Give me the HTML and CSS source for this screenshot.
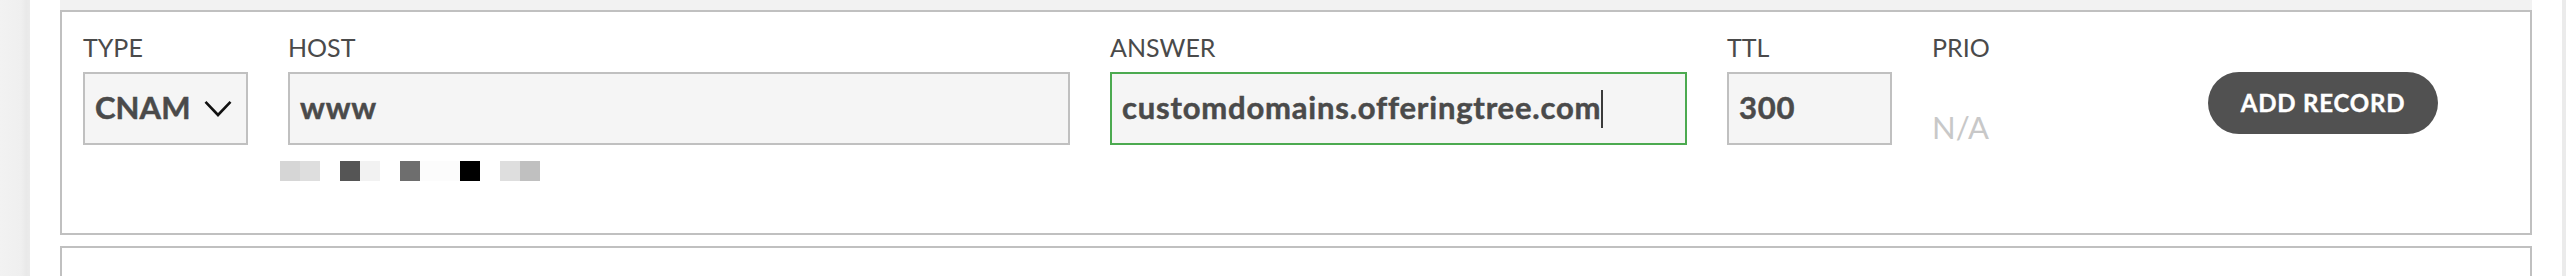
FILE: index.html
```html
<!DOCTYPE html>
<html lang="en">
<head>
<meta charset="utf-8">
<title>Add DNS record</title>
<link rel="stylesheet" href="styles.css">
</head>
<body>
<div class="page">
  <div class="rail-left"></div>
  <main class="main">
    <div class="topband"></div>
    <section class="card">
      <div class="row">
        <div class="field f-type">
          <div class="label">TYPE</div>
          <div class="box select">
            <span class="val">CNAM</span>
            <svg class="chev" width="28" height="17" viewBox="0 0 28 17"><polyline points="1.5,1.8 14,15 26.5,1.8" fill="none" stroke="#111" stroke-width="2.6"/></svg>
          </div>
        </div>
        <div class="field f-host">
          <div class="label">HOST</div>
          <div class="box"><span class="val">www</span></div>
          <div class="pixels">
            <i class="px c1"></i><i class="px c2"></i><i class="px c0"></i><i class="px c3"></i><i class="px c4"></i><i class="px c0"></i><i class="px c5"></i><i class="px c6"></i><i class="px c6"></i><i class="px c7"></i><i class="px c0"></i><i class="px c2"></i><i class="px c8"></i>
          </div>
        </div>
        <div class="field f-answer">
          <div class="label">ANSWER</div>
          <div class="box focus"><span class="val">customdomains.offeringtree.com</span><span class="caret"></span></div>
        </div>
        <div class="field f-ttl">
          <div class="label">TTL</div>
          <div class="box"><span class="val">300</span></div>
        </div>
        <div class="field f-prio">
          <div class="label">PRIO</div>
          <div class="na">N/A</div>
        </div>
        <div class="field f-btn">
          <button class="add-btn" type="button">ADD RECORD</button>
        </div>
      </div>
    </section>
    <section class="card card-next"></section>
  </main>
  <div class="rail-right"></div>
</div>
</body>
</html>
```
FILE: styles.css
```css
* { box-sizing: border-box; }
html, body { margin: 0; padding: 0; background: #fff; }
body { font-family: Lato, "Open Sans", "Liberation Sans", sans-serif; color: #4a4a4a; overflow: hidden; }

.page { display: flex; width: 2566px; height: 276px; }
.rail-left {
  width: 30px; flex: none;
  background: linear-gradient(to right, #f2f2f2 0%, #efefef 70%, #e9e9e9 88%, #ebebeb 100%);
}
.rail-right { width: 4px; flex: none; background: #ebebeb; }
.main { flex: 1; background: #fff; padding: 0 30px; }

.topband { height: 10px; background: #f2f2f2; }

.card {
  border: 2px solid #c0c0c0;
  height: 225px;
  padding: 20px 0 0 21px;
  background: #fff;
}
.card-next { margin-top: 11px; height: 60px; }

.row { display: flex; gap: 40px; align-items: flex-start; }
.field { display: flex; flex-direction: column; flex: none; }
.f-type { width: 165px; }
.f-host { width: 782px; }
.f-answer { width: 577px; }
.f-ttl { width: 165px; }
.f-prio { width: 236px; }
.f-btn { width: 230px; padding-top: 40px; }

.label {
  font-size: 25px; line-height: 30px; height: 30px;
  margin-bottom: 10px; color: #4a4a4a; font-weight: 400;
}

.box {
  height: 73px;
  border: 2px solid #c0c0c0;
  background: #f5f5f5;
  padding: 0 10px 4px;
  display: flex; align-items: center;
  font-size: 31px; font-weight: 700; color: #4a4a4a;
  letter-spacing: 0.8px;
  -webkit-text-stroke: 0.5px #4a4a4a;
  white-space: nowrap;
}
.box.select { letter-spacing: 0.1px; }
.box.focus { border-color: #4caa50; }
.select .chev { margin-left: 13px; margin-top: 4px; }
.caret { display: inline-block; width: 2px; height: 38px; background: #3a3a3a; margin: 4px 0 0 0; }

.pixels { display: flex; margin: 16px 0 0 -8px; height: 20px; }
.px { display: block; width: 20px; height: 20px; }
.c0 { background: #fff; }
.c1 { background: #d6d6d6; }
.c2 { background: #dedede; }
.c3 { background: #555555; }
.c4 { background: #f2f2f2; }
.c5 { background: #6e6e6e; }
.c6 { background: #fcfcfc; }
.c7 { background: #000; }
.c8 { background: #c0c0c0; }

.na { font-size: 31px; line-height: 40px; color: #c8c8c8; padding-top: 35px; font-weight: 400; }

.add-btn {
  width: 230px; height: 62px;
  border: 0; border-radius: 31px;
  background: #515151; color: #fff;
  font-family: Lato, "Open Sans", sans-serif;
  font-size: 24px; font-weight: 700;
  letter-spacing: 0.8px;
  -webkit-text-stroke: 0.4px #fff;
  padding: 0; margin: 0;
  line-height: 60px;
}
```
